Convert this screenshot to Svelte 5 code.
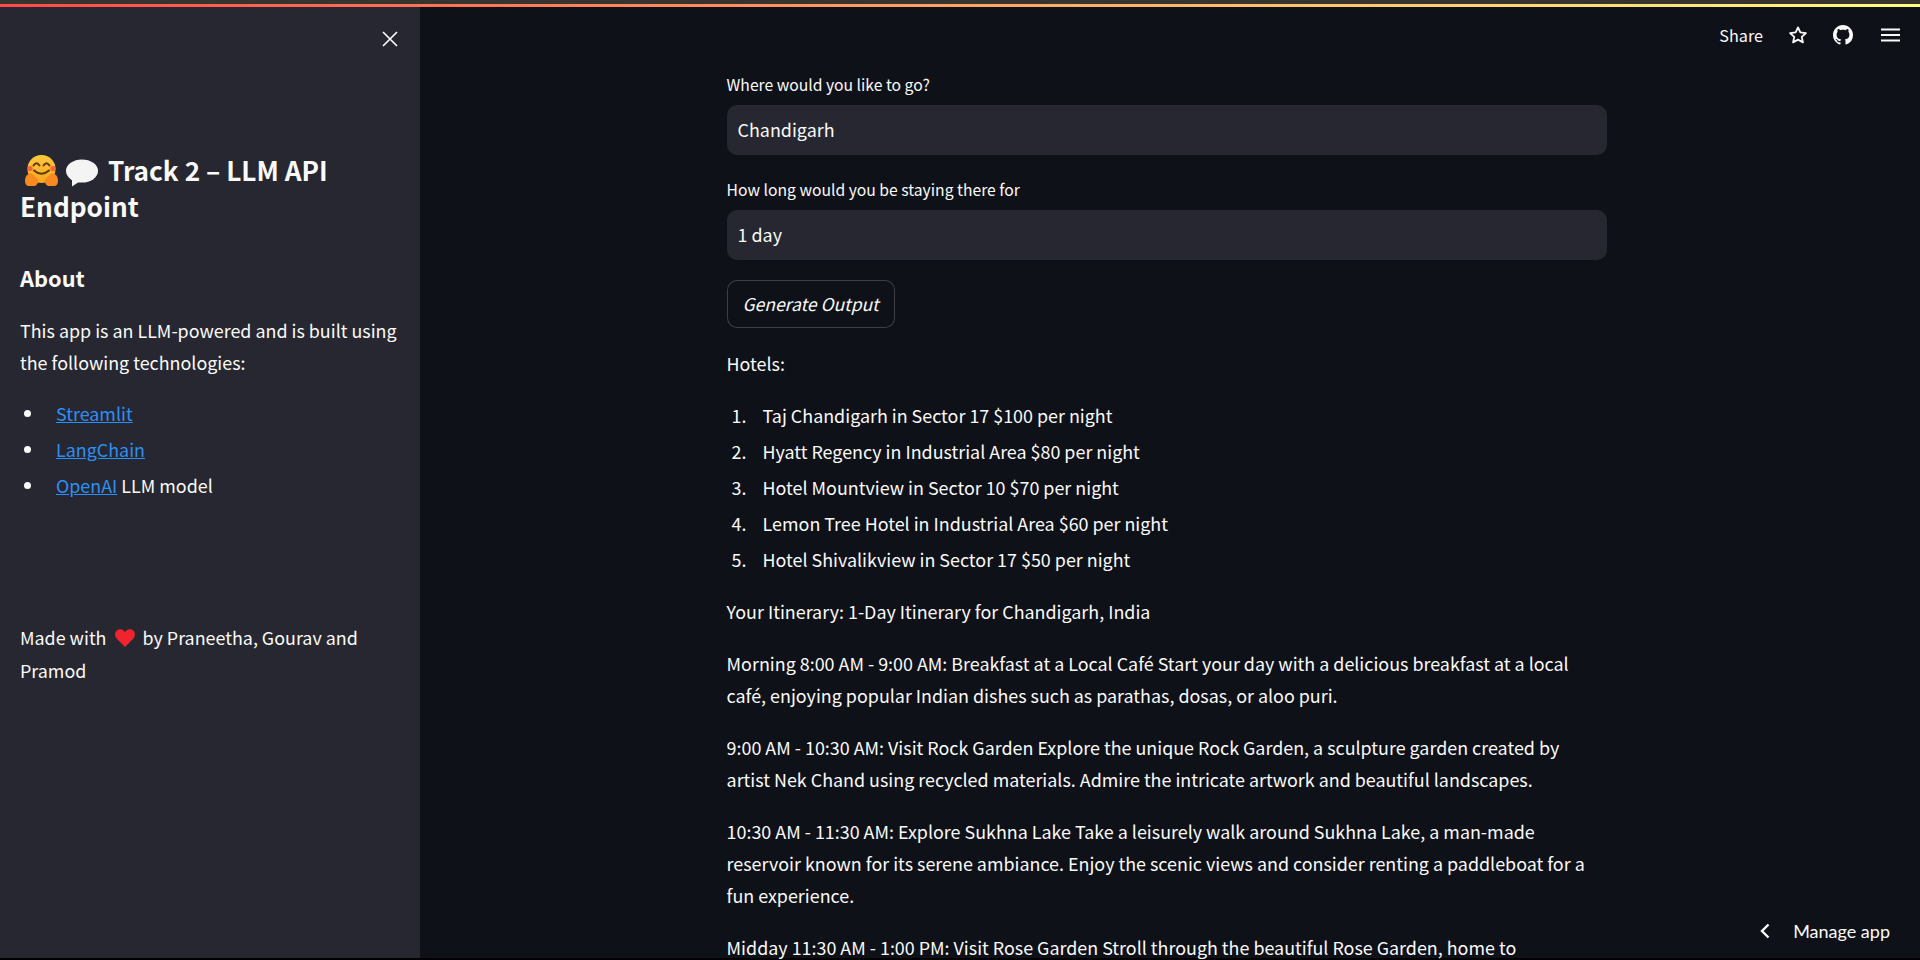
<script lang="ts">
  const hotels = [
    'Taj Chandigarh in Sector 17 $100 per night',
    'Hyatt Regency in Industrial Area $80 per night',
    'Hotel Mountview in Sector 10 $70 per night',
    'Lemon Tree Hotel in Industrial Area $60 per night',
    'Hotel Shivalikview in Sector 17 $50 per night'
  ];

  const paragraphs = [
    'Your Itinerary: 1-Day Itinerary for Chandigarh, India',
    'Morning 8:00 AM - 9:00 AM: Breakfast at a Local Café Start your day with a delicious breakfast at a local café, enjoying popular Indian dishes such as parathas, dosas, or aloo puri.',
    '9:00 AM - 10:30 AM: Visit Rock Garden Explore the unique Rock Garden, a sculpture garden created by artist Nek Chand using recycled materials. Admire the intricate artwork and beautiful landscapes.',
    '10:30 AM - 11:30 AM: Explore Sukhna Lake Take a leisurely walk around Sukhna Lake, a man-made reservoir known for its serene ambiance. Enjoy the scenic views and consider renting a paddleboat for a fun experience.',
    'Midday 11:30 AM - 1:00 PM: Visit Rose Garden Stroll through the beautiful Rose Garden, home to'
  ];
</script>

<div class="page">
  <div class="topline"></div>
  <div class="body">
    <aside class="sidebar">
      <button class="close" aria-label="Close sidebar">
        <svg width="16" height="16" viewBox="0 0 16 16"><path d="M1 1 15 15M15 1 1 15" stroke="#fafafa" stroke-width="1.700" fill="none" /></svg>
      </button>
      <h1>
        <svg class="emoji first" width="33" height="32" viewBox="0 0 33 32">
          <defs>
            <linearGradient id="face" x1="0" y1="0" x2="0" y2="1">
              <stop offset="0" stop-color="#ffc83d" />
              <stop offset="1" stop-color="#fba51f" />
            </linearGradient>
          </defs>
          <circle cx="16.500" cy="14" r="14" fill="url(#face)" />
          <path d="M8.500 10.500q3-4.500 6 0M18.500 10.500q3-4.500 6 0" stroke="#5a3a10" stroke-width="1.900" fill="none" stroke-linecap="round" />
          <path d="M9 15.500q7.500 6.500 15 0" stroke="#5a3a10" stroke-width="2" fill="none" stroke-linecap="round" />
          <circle cx="5" cy="13.500" r="2.600" fill="#f2643c" /><circle cx="28" cy="13.500" r="2.600" fill="#f2643c" />
          <path d="M0 26q0-7 6-8l7 6q1 5-3 7H3q-3-1-3-5zM33 26q0-7-6-8l-7 6q-1 5 3 7h7q3-1 3-5z" fill="#f98a1f" />
        </svg>
        <svg class="emoji second" width="32" height="28" viewBox="0 0 32 28">
          <ellipse cx="16" cy="12" rx="16" ry="11.500" fill="#f4f4f4" />
          <path d="M6 19v8.500l9-6z" fill="#f4f4f4" />
        </svg>
        Track 2 – LLM API Endpoint
      </h1>
      <h3>About</h3>
      <p class="intro">This app is an LLM-powered and is built using the following technologies:</p>
      <ul>
        <li><span><a href="#streamlit">Streamlit</a></span></li>
        <li><span><a href="#langchain">LangChain</a></span></li>
        <li><span><a href="#openai">OpenAI</a> LLM model</span></li>
      </ul>
      <p class="made">
        Made with
        <svg class="heart" width="20" height="18" viewBox="0 0 20 18">
          <path d="M10 18 1.800 9.800C-1 6.800-.2 1.800 3.500.6 6 -.2 8.800.8 10 3.200 11.200.8 14-.2 16.500.6c3.700 1.200 4.500 6.200 1.700 9.200z" fill="#f0242f" />
        </svg>
        by Praneetha, Gourav and Pramod
      </p>
    </aside>
    <main class="main">
      <div class="toolbar">
        <span class="share">Share</span>
        <svg class="star" width="20" height="20" viewBox="0 0 24 24"><path d="M12 2.800l2.800 6.100 6.700.8-5 4.500 1.400 6.600L12 17.500l-5.900 3.300 1.400-6.600-5-4.500 6.700-.8z" fill="none" stroke="#fafafa" stroke-width="2.200" stroke-linejoin="round" /></svg>
        <svg class="github" width="20" height="20" viewBox="0 0 16 16"><path fill="#fafafa" d="M8 0C3.580 0 0 3.580 0 8c0 3.540 2.290 6.530 5.470 7.590.4.070.55-.17.55-.38 0-.19-.01-.82-.01-1.490-2.010.37-2.530-.49-2.690-.94-.09-.23-.48-.94-.82-1.130-.28-.15-.68-.52-.01-.53.63-.01 1.080.58 1.230.82.720 1.210 1.870.87 2.330.66.070-.52.280-.87.510-1.070-1.780-.2-3.640-.89-3.640-3.950 0-.87.310-1.590.820-2.150-.08-.2-.36-1.020.08-2.120 0 0 .67-.21 2.200.82.640-.18 1.320-.27 2-.27s1.360.09 2 .27c1.530-1.040 2.200-.82 2.200-.82.440 1.100.16 1.920.08 2.120.51.560.82 1.270.82 2.150 0 3.070-1.870 3.750-3.650 3.950.29.250.54.730.54 1.480 0 1.070-.01 1.930-.01 2.200 0 .21.150.46.550.38A8.010 8.010 0 0 0 16 8c0-4.420-3.580-8-8-8z" /></svg>
        <svg class="menu" width="19" height="14" viewBox="0 0 19 14"><path d="M0 1.500h19M0 7h19M0 12.500h19" stroke="#fafafa" stroke-width="1.800" fill="none" /></svg>
      </div>
      <div class="content">
        <label for="dest">Where would you like to go?</label>
        <input id="dest" value="Chandigarh" />
        <label for="stay">How long would you be staying there for</label>
        <input id="stay" value="1 day" />
        <button class="generate">Generate Output</button>
        <p class="hotels">Hotels:</p>
        <ol>
          {#each hotels as hotel}
            <li><span>{hotel}</span></li>
          {/each}
        </ol>
        {#each paragraphs as text}
          <p>{text}</p>
        {/each}
      </div>
      <div class="manage">
        <svg width="10" height="16" viewBox="0 0 10 16"><path d="M8.500 1.500 2 8l6.500 6.500" stroke="#fafafa" stroke-width="2.400" fill="none" /></svg>
        <span>Manage app</span>
      </div>
    </main>
  </div>
  <div class="bottomline"></div>
</div>

<style>
  :global(body) {
    margin: 0;
    background: #0e1117;
    overflow: hidden;
  }

  .page {
    height: 960px;
    overflow: hidden;
    display: flex;
    flex-direction: column;
    font-family: "Noto Sans CJK SC", "Noto Sans", sans-serif;
    font-size: 17.900px;
    line-height: 32px;
    color: #fafafa;
  }

  .topline {
    height: 7px;
    flex: none;
    border-top: 4px solid #37332f;
    box-sizing: border-box;
    background: linear-gradient(90deg, #ff4b4b, #fffd80);
  }

  .bottomline {
    height: 2px;
    flex: none;
    background: #000;
  }

  .body {
    flex: 1;
    min-height: 0;
    display: flex;
  }

  .sidebar {
    position: relative;
    width: 420px;
    flex: none;
    box-sizing: border-box;
    padding: 145px 20px 0;
    background: #262730;
  }

  .close {
    position: absolute;
    top: 24px;
    right: 22px;
    width: 16px;
    height: 16px;
    padding: 0;
    border: 0;
    background: none;
    line-height: 0;
  }

  h1 {
    margin: 0;
    font-size: 26.200px;
    line-height: 36px;
    font-weight: 600;
  }

  .emoji {
    vertical-align: -6px;
  }

  .first {
    margin: 0 2px 0 5px;
  }

  .second {
    margin-right: 4px;
  }

  h3 {
    margin: 38px 0 0;
    font-size: 21.800px;
    line-height: 32px;
    font-weight: 600;
  }

  .intro {
    margin: 20px 0 0;
  }

  ul {
    list-style: none;
    margin: 17px 0 0;
    padding: 0;
  }

  ul li {
    display: flex;
    align-items: center;
    height: 36px;
  }

  ul li::before {
    content: '';
    width: 7px;
    height: 7px;
    margin: 0 25px 0 4px;
    border-radius: 50%;
    background: #fafafa;
  }

  a {
    color: #2e90f5;
  }

  .made {
    margin: 118px 0 0;
    line-height: 33px;
  }

  .heart {
    vertical-align: -2px;
    margin: 0 4px;
  }

  .main {
    position: relative;
    flex: 1;
    min-width: 0;
  }

  .toolbar {
    position: absolute;
    top: 18px;
    right: 20px;
    display: flex;
    align-items: center;
    font-size: 16.200px;
    line-height: 20px;
  }

  .star {
    margin-left: 25px;
  }

  .github {
    margin-left: 25px;
  }

  .menu {
    margin-left: 28px;
  }

  .content {
    width: 880px;
    margin-left: 306.600px;
    padding-top: 63px;
  }

  label {
    display: block;
    font-size: 15.700px;
    line-height: 30px;
  }

  input {
    display: block;
    width: 100%;
    height: 50px;
    box-sizing: border-box;
    margin: 5px 0 20px;
    padding: 0 11px 2px;
    border: 0;
    border-radius: 10px;
    background: #262730;
    color: #fafafa;
    font: inherit;
  }

  .generate {
    display: block;
    width: 168px;
    height: 48px;
    padding: 0 0 2px;
    border: 1px solid rgba(250, 250, 250, 0.2);
    border-radius: 10px;
    background: #0e1117;
    color: #fafafa;
    font: italic 17.500px "Noto Sans CJK SC", "Noto Sans", sans-serif;
  }

  p {
    margin: 0 0 20px;
  }

  .hotels {
    margin-top: 19px;
  }

  ol {
    list-style: none;
    counter-reset: hotel;
    margin: 0 0 20px;
    padding: 0;
  }

  ol li {
    display: flex;
    margin-bottom: 4px;
    counter-increment: hotel;
  }

  ol li::before {
    content: counter(hotel) '.';
    width: 30px;
    padding-left: 5px;
    padding-right: 1px;
    box-sizing: content-box;
  }

  .manage {
    position: absolute;
    right: 30px;
    bottom: 12px;
    display: flex;
    align-items: center;
    gap: 23px;
    font-family: "Lato", sans-serif;
    font-size: 18px;
    line-height: 30px;
  }
</style>
